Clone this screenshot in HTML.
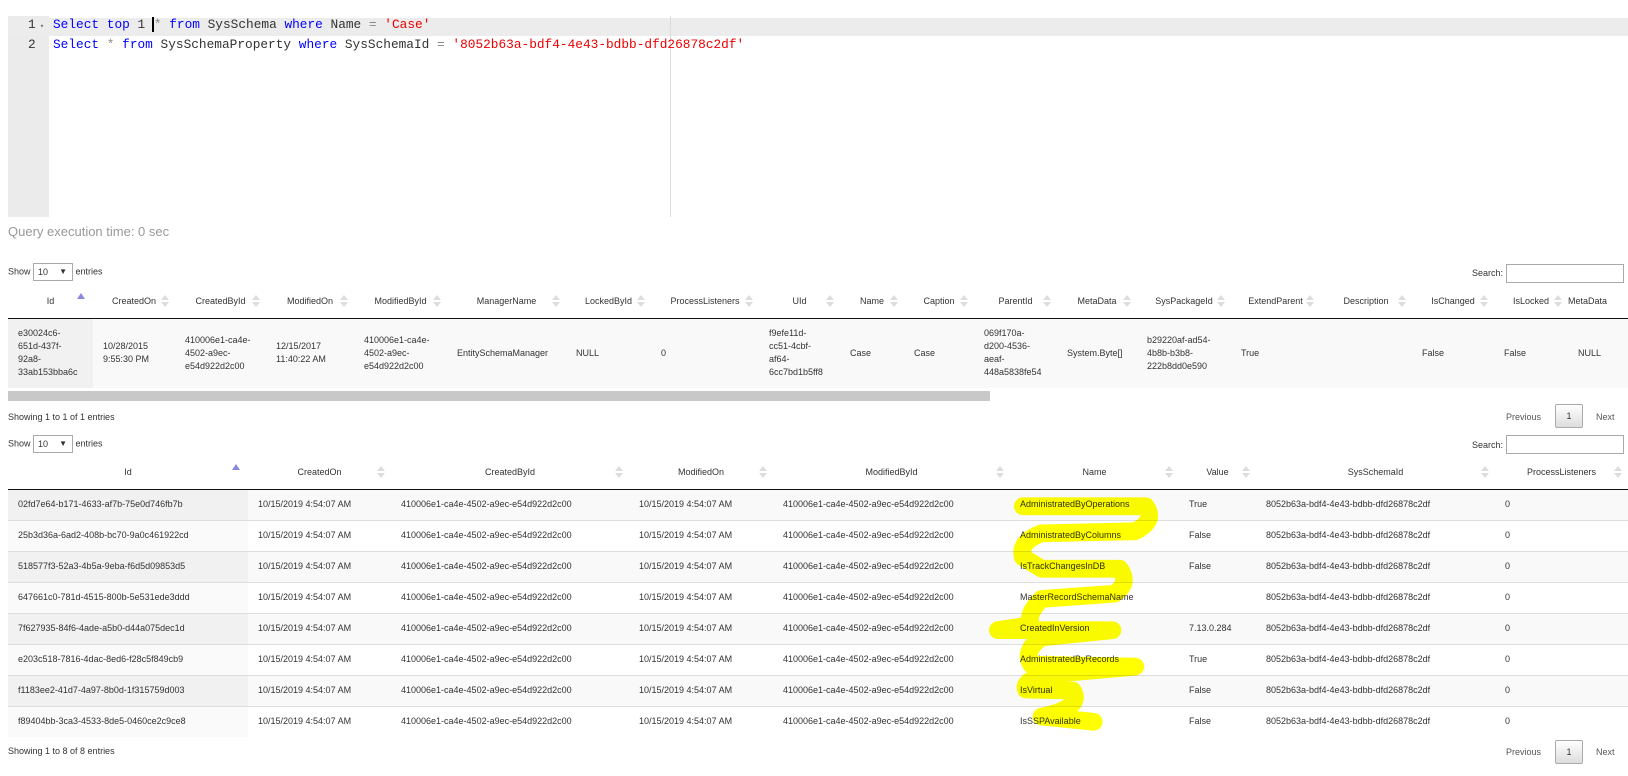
<!DOCTYPE html>
<html><head><meta charset="utf-8"><style>
*{margin:0;padding:0;box-sizing:border-box}
body{width:1628px;height:776px;overflow:hidden;background:#fff;font-family:"Liberation Sans",sans-serif;color:#333;position:relative;font-size:9px}
.a{position:absolute;white-space:nowrap}
.ed{position:absolute;left:8px;top:16px;width:1620px;height:201px;background:#fff}
.gut{position:absolute;left:0;top:0;width:41px;height:201px;background:#ebebeb}
.code{font-family:"Liberation Mono",monospace;font-size:12.8px;line-height:20px}
.k{color:#00f}.s{color:#e00}.o{color:#888}
.sel{display:inline-block;border:1px solid #aaa;height:18px;width:40px;vertical-align:middle;font-size:9px;line-height:16px;padding-left:4px;position:relative}
.sel:after{content:"▼";position:absolute;right:5px;top:0;font-size:8px}
.inp{position:absolute;border:1px solid #aaa;width:118px;height:19px}
table{border-collapse:collapse;table-layout:fixed;position:absolute}
th{font-weight:normal;font-size:9px;text-align:center;position:relative;border-bottom:1px solid #111}
td{font-size:9px;padding:0 10px;line-height:13px;white-space:nowrap;overflow:hidden}
.si:after{content:"";position:absolute;right:6px;top:50%;margin-top:-6px;width:0;height:0;border-left:4px solid transparent;border-right:4px solid transparent;border-bottom:5px solid #ddd}
.si:before{content:"";position:absolute;right:6px;top:50%;margin-top:1px;width:0;height:0;border-left:4px solid transparent;border-right:4px solid transparent;border-top:5px solid #ddd}
.up:after{content:"";position:absolute;right:8px;top:50%;margin-top:-8px;border-left:4px solid transparent;border-right:4px solid transparent;border-bottom:6px solid #8888dd}
#t2 td{height:31px;border-top:1px solid #ddd}
#t2 tr.o1 td{background:#f9f9f9}
#t2 tr.o1 td:first-child{background:#f1f1f1}
#t2 tr.e td:first-child{background:#fafafa}
.pg{position:absolute;font-size:9px;color:#555}
.pb{position:absolute;width:28px;height:24px;border:1px solid #aaa;border-radius:2px;background:linear-gradient(#fff,#ddd);text-align:center;line-height:22px;font-size:9px}
</style></head><body>
<div class="ed"><div class="gut"></div>
<div class="a" style="left:0;top:2px;width:1620px;height:18px;background:#ececec"></div>
<div class="a" style="left:41px;top:2px;width:1579px;height:18px;background:#ececec"></div>
<div class="a" style="left:662px;top:0;width:1px;height:201px;background:#ddd"></div>
<div class="a code" style="left:20px;top:-1px;color:#333">1<span style="font-size:7px;color:#666"> ▾</span></div>
<div class="a code" style="left:20px;top:19px;color:#333">2</div>
<div class="a code" style="left:45px;top:-1px;color:#333"><span class="k">Select</span> <span class="k">top</span> 1 <span style="border-left:2px solid #000;margin-left:-1px"></span><span class="o">*</span> <span class="k">from</span> SysSchema <span class="k">where</span> Name <span class="o">=</span> <span class="s">'Case'</span></div>
<div class="a code" style="left:45px;top:19px;color:#333"><span class="k">Select</span> <span class="o">*</span> <span class="k">from</span> SysSchemaProperty <span class="k">where</span> SysSchemaId <span class="o">=</span> <span class="s">'8052b63a-bdf4-4e43-bdbb-dfd26878c2df'</span></div>
</div>
<div class="a" style="left:8px;top:224px;font-size:13px;color:#999">Query execution time: 0 sec</div>

<div class="a" style="left:8px;top:263px;font-size:9px">Show <span class="sel">10</span> entries</div>
<div class="a" style="left:1472px;top:268px;font-size:9px">Search:</div>
<div class="inp" style="left:1506px;top:264px"></div>

<div class="a" style="left:8px;top:284px;width:1620px;height:120px;overflow:hidden">
<table style="left:0;top:0;width:1640px">
<colgroup><col style="width:85px"><col style="width:82px"><col style="width:91px"><col style="width:88px"><col style="width:93px"><col style="width:119px"><col style="width:85px"><col style="width:108px"><col style="width:81px"><col style="width:64px"><col style="width:70px"><col style="width:83px"><col style="width:80px"><col style="width:94px"><col style="width:89px"><col style="width:92px"><col style="width:82px"><col style="width:74px"><col style="width:80px"></colgroup>
<tr style="height:34px"><th class="up">Id</th><th class="si">CreatedOn</th><th class="si">CreatedById</th><th class="si">ModifiedOn</th><th class="si">ModifiedById</th><th class="si">ManagerName</th><th class="si">LockedById</th><th class="si">ProcessListeners</th><th class="si">UId</th><th class="si">Name</th><th class="si">Caption</th><th class="si">ParentId</th><th class="si">MetaData</th><th class="si">SysPackageId</th><th class="si">ExtendParent</th><th class="si">Description</th><th class="si">IsChanged</th><th class="si">IsLocked</th><th class="si" style="text-align:left">MetaData</th></tr>
<tr style="height:70px;background:#f9f9f9"><td style="background:#f1f1f1">e30024c6-<br>651d-437f-<br>92a8-<br>33ab153bba6c</td><td>10/28/2015<br>9:55:30 PM</td><td>410006e1-ca4e-<br>4502-a9ec-<br>e54d922d2c00</td><td>12/15/2017<br>11:40:22 AM</td><td>410006e1-ca4e-<br>4502-a9ec-<br>e54d922d2c00</td><td>EntitySchemaManager</td><td>NULL</td><td>0</td><td>f9efe11d-<br>cc51-4cbf-<br>af64-<br>6cc7bd1b5ff8</td><td>Case</td><td>Case</td><td>069f170a-<br>d200-4536-<br>aeaf-<br>448a5838fe54</td><td>System.Byte[]</td><td>b29220af-ad54-<br>4b8b-b3b8-<br>222b8dd0e590</td><td>True</td><td></td><td>False</td><td>False</td><td>NULL</td></tr>
</table>
<div class="a" style="left:0;top:107px;width:982px;height:10px;background:#c8c8c8"></div>
</div>

<div class="a" style="left:8px;top:412px">Showing 1 to 1 of 1 entries</div>
<div class="pg" style="left:1506px;top:412px">Previous</div>
<div class="pb" style="left:1555px;top:404px">1</div>
<div class="pg" style="left:1596px;top:412px">Next</div>

<div class="a" style="left:8px;top:435px">Show <span class="sel">10</span> entries</div>
<div class="a" style="left:1472px;top:440px">Search:</div>
<div class="inp" style="left:1506px;top:435px"></div>

<table id="t2" style="left:8px;top:455px;width:1620px">
<colgroup><col style="width:240px"><col style="width:143px"><col style="width:238px"><col style="width:144px"><col style="width:237px"><col style="width:169px"><col style="width:77px"><col style="width:239px"><col style="width:133px"></colgroup>
<tr style="height:34px"><th class="up">Id</th><th class="si">CreatedOn</th><th class="si">CreatedById</th><th class="si">ModifiedOn</th><th class="si">ModifiedById</th><th class="si">Name</th><th class="si">Value</th><th class="si">SysSchemaId</th><th class="si">ProcessListeners</th></tr>
<tr class="o1"><td>02fd7e64-b171-4633-af7b-75e0d746fb7b</td><td>10/15/2019 4:54:07 AM</td><td>410006e1-ca4e-4502-a9ec-e54d922d2c00</td><td>10/15/2019 4:54:07 AM</td><td>410006e1-ca4e-4502-a9ec-e54d922d2c00</td><td>AdministratedByOperations</td><td>True</td><td>8052b63a-bdf4-4e43-bdbb-dfd26878c2df</td><td>0</td></tr>
<tr class="e"><td>25b3d36a-6ad2-408b-bc70-9a0c461922cd</td><td>10/15/2019 4:54:07 AM</td><td>410006e1-ca4e-4502-a9ec-e54d922d2c00</td><td>10/15/2019 4:54:07 AM</td><td>410006e1-ca4e-4502-a9ec-e54d922d2c00</td><td>AdministratedByColumns</td><td>False</td><td>8052b63a-bdf4-4e43-bdbb-dfd26878c2df</td><td>0</td></tr>
<tr class="o1"><td>518577f3-52a3-4b5a-9eba-f6d5d09853d5</td><td>10/15/2019 4:54:07 AM</td><td>410006e1-ca4e-4502-a9ec-e54d922d2c00</td><td>10/15/2019 4:54:07 AM</td><td>410006e1-ca4e-4502-a9ec-e54d922d2c00</td><td>IsTrackChangesInDB</td><td>False</td><td>8052b63a-bdf4-4e43-bdbb-dfd26878c2df</td><td>0</td></tr>
<tr class="e"><td>647661c0-781d-4515-800b-5e531ede3ddd</td><td>10/15/2019 4:54:07 AM</td><td>410006e1-ca4e-4502-a9ec-e54d922d2c00</td><td>10/15/2019 4:54:07 AM</td><td>410006e1-ca4e-4502-a9ec-e54d922d2c00</td><td>MasterRecordSchemaName</td><td></td><td>8052b63a-bdf4-4e43-bdbb-dfd26878c2df</td><td>0</td></tr>
<tr class="o1"><td>7f627935-84f6-4ade-a5b0-d44a075dec1d</td><td>10/15/2019 4:54:07 AM</td><td>410006e1-ca4e-4502-a9ec-e54d922d2c00</td><td>10/15/2019 4:54:07 AM</td><td>410006e1-ca4e-4502-a9ec-e54d922d2c00</td><td>CreatedInVersion</td><td>7.13.0.284</td><td>8052b63a-bdf4-4e43-bdbb-dfd26878c2df</td><td>0</td></tr>
<tr class="e"><td>e203c518-7816-4dac-8ed6-f28c5f849cb9</td><td>10/15/2019 4:54:07 AM</td><td>410006e1-ca4e-4502-a9ec-e54d922d2c00</td><td>10/15/2019 4:54:07 AM</td><td>410006e1-ca4e-4502-a9ec-e54d922d2c00</td><td>AdministratedByRecords</td><td>True</td><td>8052b63a-bdf4-4e43-bdbb-dfd26878c2df</td><td>0</td></tr>
<tr class="o1"><td>f1183ee2-41d7-4a97-8b0d-1f315759d003</td><td>10/15/2019 4:54:07 AM</td><td>410006e1-ca4e-4502-a9ec-e54d922d2c00</td><td>10/15/2019 4:54:07 AM</td><td>410006e1-ca4e-4502-a9ec-e54d922d2c00</td><td>IsVirtual</td><td>False</td><td>8052b63a-bdf4-4e43-bdbb-dfd26878c2df</td><td>0</td></tr>
<tr class="e"><td>f89404bb-3ca3-4533-8de5-0460ce2c9ce8</td><td>10/15/2019 4:54:07 AM</td><td>410006e1-ca4e-4502-a9ec-e54d922d2c00</td><td>10/15/2019 4:54:07 AM</td><td>410006e1-ca4e-4502-a9ec-e54d922d2c00</td><td>IsSSPAvailable</td><td>False</td><td>8052b63a-bdf4-4e43-bdbb-dfd26878c2df</td><td>0</td></tr>
</table>

<svg class="a" style="left:0;top:0;mix-blend-mode:multiply" width="1628" height="776" viewBox="0 0 1563 745">
<path d="M982 486 L1100 486 Q1110 500 1090 510 L1000 512 Q978 520 982 535 L1000 546 L1075 546 Q1085 560 1070 570 L1000 575 Q985 590 990 600 L958 605 L1068 605 L1000 612 Q982 625 990 638 L1090 640 L1000 648 Q982 655 985 662 L1030 663 Q1040 680 1000 688 L1050 693" fill="none" stroke="#ffff00" stroke-width="17" stroke-linejoin="round" stroke-linecap="round"/>
</svg>

<div class="a" style="left:8px;top:746px">Showing 1 to 8 of 8 entries</div>
<div class="pg" style="left:1506px;top:747px">Previous</div>
<div class="pb" style="left:1555px;top:740px">1</div>
<div class="pg" style="left:1596px;top:747px">Next</div>
</body></html>
